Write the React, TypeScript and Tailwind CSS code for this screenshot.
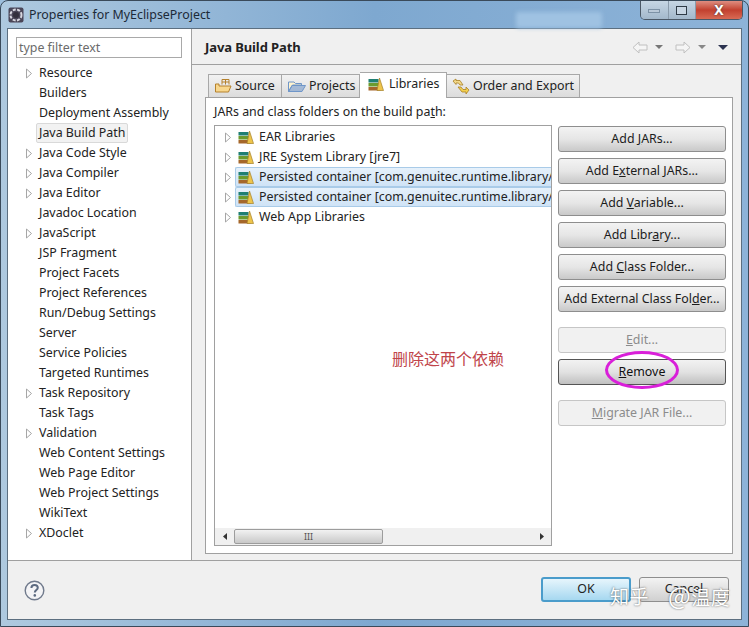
const treeItems = [
  { label: 'Resource', arrow: true },
  { label: 'Builders' },
  { label: 'Deployment Assembly' },
  { label: 'Java Build Path', selected: true },
  { label: 'Java Code Style', arrow: true },
  { label: 'Java Compiler', arrow: true },
  { label: 'Java Editor', arrow: true },
  { label: 'Javadoc Location' },
  { label: 'JavaScript', arrow: true },
  { label: 'JSP Fragment' },
  { label: 'Project Facets' },
  { label: 'Project References' },
  { label: 'Run/Debug Settings' },
  { label: 'Server' },
  { label: 'Service Policies' },
  { label: 'Targeted Runtimes' },
  { label: 'Task Repository', arrow: true },
  { label: 'Task Tags' },
  { label: 'Validation', arrow: true },
  { label: 'Web Content Settings' },
  { label: 'Web Page Editor' },
  { label: 'Web Project Settings' },
  { label: 'WikiText' },
  { label: 'XDoclet', arrow: true },
]

const libraries = [
  { id: 'ear', label: 'EAR Libraries' },
  { id: 'jre', label: 'JRE System Library [jre7]' },
  { id: 'p1', label: 'Persisted container [com.genuitec.runtime.library/com.genuitec.runtime.libraries.javaee]', selected: true },
  { id: 'p2', label: 'Persisted container [com.genuitec.runtime.library/com.genuitec.runtime.libraries.web]', selected: true },
  { id: 'web', label: 'Web App Libraries' },
]

const Arrow = () => (
  <svg width="8" height="11" viewBox="0 0 8 11" className="shrink-0">
    <path d="M1.5 1 L6.5 5.5 L1.5 10 Z" fill="#fff" stroke="#a6a6a6" />
  </svg>
)

const LibIcon = () => (
  <svg width="16" height="14" viewBox="0 0 16 14" className="shrink-0">
    <rect x="0.5" y="2" width="10" height="3.5" fill="#1f7f73" />
    <rect x="0.5" y="6" width="11" height="3.5" fill="#6b9b2e" />
    <rect x="0.5" y="10" width="12" height="3.5" fill="#a5672a" />
    <path d="M11.5 1 L15.5 13.5 L9 13.5 Z" fill="#eec44a" stroke="#a5812a" strokeWidth="0.7" />
  </svg>
)

const FolderIcon = ({ tint }: { tint: string }) => (
  <svg width="20" height="16" viewBox="0 0 20 16" className="shrink-0">
    <path d="M1.5 13.5 V4 H7 L8.5 5.5 H14.5 V7 H5.5 L1.5 13.5 Z" fill="#fff3cf" stroke={tint} />
    <path d="M1.5 13.5 L5 7.5 H18.5 L15 13.5 Z" fill={tint} fillOpacity="0.55" stroke={tint} />
  </svg>
)

const SourceIcon = () => (
  <svg width="20" height="16" viewBox="0 0 20 16" className="shrink-0">
    <path d="M1.5 14 V6 H5 V8 H17 L14.5 14 Z" fill="#f8d78d" stroke="#b5812c" />
    <path d="M8 6.5 V1.5 H15 V6.5 M8 4 H15 M11.5 1.5 V6.5" fill="none" stroke="#b5812c" />
  </svg>
)

const OrderIcon = () => (
  <svg width="20" height="17" viewBox="0 0 20 17" className="shrink-0">
    <path d="M2 3 L5 1 V2.5 H9 L12 7 H9 L7.5 5 H5 V6.5 Z" fill="#f3d98a" stroke="#a98024" strokeWidth="0.8" />
    <path d="M18 12 L15 16 V14 H11 L7 9 H10 L12 11.5 H15 V9 Z" fill="#f3d04f" stroke="#a98024" strokeWidth="0.8" />
  </svg>
)

const Btn = ({ children, disabled, dark }: { children: React.ReactNode; disabled?: boolean; dark?: boolean }) => (
  <div
    className={
      disabled
        ? 'h-[26px] w-[168px] shrink-0 flex items-center justify-center rounded-[3px] border border-[#c6c6c6] bg-[#f1f1f1] text-[#8c8c8c]'
        : dark
          ? 'h-[26px] w-[168px] shrink-0 flex items-center justify-center rounded-[3px] border border-[#555] bg-gradient-to-b from-[#f2f2f2] via-[#e2e2e2] to-[#c0c0c0] text-[#111]'
          : 'h-[26px] w-[168px] shrink-0 flex items-center justify-center rounded-[3px] border border-[#8e8e8e] bg-gradient-to-b from-[#f3f3f3] via-[#e6e6e6] to-[#c9c9c9] text-[#1c1c1c]'
    }
  >
    <span className="whitespace-nowrap">{children}</span>
  </div>
)

const App = () => {
  return (
    <div className="relative h-[627px] w-[749px] overflow-hidden bg-[#9dbfdd] text-[12.4px] leading-[20px] text-[#222] font-['Noto_Sans','Open_Sans',sans-serif]">
      {/* window frame */}
      <div className="flex h-[627px] w-[749px] flex-col rounded-t-[8px] border border-[#3a4a5a] bg-gradient-to-r from-[#aec9df] via-[#7ea8d0] to-[#8db3d8] px-[6px] pb-[6px]">
        {/* title bar */}
        <div className="flex h-[27px] shrink-0 items-start justify-between">
          <div className="flex items-center gap-[5px] pl-[1px] pt-[4px]">
            <svg width="16" height="16" viewBox="0 0 16 16">
              <rect x="0.5" y="0.5" width="15" height="15" rx="2" fill="#4a4658" />
              <circle cx="8" cy="8" r="5.5" fill="none" stroke="#d8d8e0" strokeWidth="2" strokeDasharray="3 1.4" />
              <circle cx="8" cy="8" r="3" fill="#33303d" />
            </svg>
            <span className="text-[#1c2a38]">Properties for MyEclipseProject</span>
          </div>
          {/* blurred window behind the title bar */}
          <div className="ml-auto mr-[38px] mt-[11px] h-[16px] w-[86px] rounded-[2px] bg-[#9fc2e2] blur-[2px]" />
          {/* window buttons */}
          <div className="mr-[-1px] flex h-[19px] w-[103px] overflow-hidden rounded-b-[5px] border border-t-0 border-[#4b5866]">
            <div className="flex flex-1 items-center justify-center border-r border-[#8a9bab] bg-gradient-to-b from-[#c6d6e4] to-[#a3b8cb]">
              <div className="mt-[2px] h-[4px] w-[12px] border border-[#7d92a6] bg-[#bac9d8]" />
            </div>
            <div className="flex flex-1 items-center justify-center border-r border-[#8a9bab] bg-gradient-to-b from-[#c6d6e4] to-[#a3b8cb]">
              <div className="h-[9px] w-[11px] border border-[#2f3b47] bg-[#c8d6e3]" />
            </div>
            <div className="flex w-[46px] items-center justify-center bg-gradient-to-b from-[#de8d80] via-[#c2402f] to-[#d96a54] text-[14px] font-bold text-white [text-shadow:0_0_2px_#333]">X</div>
          </div>
        </div>

        {/* dialog body */}
        <div className="flex min-h-0 flex-1 flex-col border border-[#5c6f80] bg-[#f0f0f0]">
          <div className="flex min-h-0 flex-1 border-b border-[#a0a0a0]">
            {/* left tree */}
            <div className="flex w-[184px] shrink-0 flex-col border-r border-[#a0a0a0] bg-white pl-[8px]">
              <div className="mt-[8px] flex h-[21px] w-[166px] shrink-0 items-center border border-[#a9a9a9] px-[2px] text-[#6b6b6b]">type filter text</div>
              <div className="mt-[5px] flex flex-col">
                {treeItems.map((it) => (
                  <div key={it.label} className="flex h-[20px] items-center">
                    <div className="flex w-[23px] shrink-0 justify-center pl-[3px]">{it.arrow && <Arrow />}</div>
                    <span className={it.selected ? 'ml-[-3px] rounded-[2px] border border-[#d9d9d9] bg-[#f2f2f2] px-[2px] leading-[18px]' : ''}>
                      {it.label}
                    </span>
                  </div>
                ))}
              </div>
            </div>

            {/* right side */}
            <div className="flex min-w-0 flex-1 flex-col">
              <div className="flex h-[36px] shrink-0 items-center justify-between border-b border-[#a0a0a0] pl-[13px] pr-[13px] pt-[1px]">
                <span className="text-[13px] font-bold text-[#222] tracking-[-0.1px]">Java Build Path</span>
                <div className="flex items-center gap-[5px]">
                  <svg width="16" height="13" viewBox="0 0 16 13"><path d="M1 6.5 L7 1 V4 H15 V9 H7 V12 Z" fill="#f5f5f5" stroke="#c0c0c0" /></svg>
                  <svg width="8" height="4" viewBox="0 0 8 4" className="ml-[2px]"><path d="M0 0 H8 L4 4 Z" fill="#777" /></svg>
                  <svg width="16" height="13" viewBox="0 0 16 13" className="ml-[7px]"><path d="M15 6.5 L9 1 V4 H1 V9 H9 V12 Z" fill="#f5f5f5" stroke="#c0c0c0" /></svg>
                  <svg width="8" height="4" viewBox="0 0 8 4" className="ml-[2px]"><path d="M0 0 H8 L4 4 Z" fill="#888" /></svg>
                  <svg width="10" height="5" viewBox="0 0 10 5" className="ml-[7px]"><path d="M0 0 H10 L5 5 Z" fill="#2c3350" /></svg>
                </div>
              </div>

              {/* tabs */}
              <div className="flex flex-1 flex-col pl-[13px] pr-[8px] pt-[7px] pb-[6px]">
                <div className="relative z-10 flex h-[25px] shrink-0 items-end pl-[3px] whitespace-nowrap">
                  <div className="flex h-[23px] w-[74px] items-center gap-[1px] border border-b-0 border-[#a8a8a8] bg-gradient-to-b from-[#f2f2f2] to-[#dcdcdc] pl-[5px]">
                    <SourceIcon /><span>Source</span>
                  </div>
                  <div className="flex h-[23px] w-[78px] items-center gap-[2px] border border-b-0 border-l-0 border-[#a8a8a8] bg-gradient-to-b from-[#f2f2f2] to-[#dcdcdc] pl-[5px]">
                    <FolderIcon tint="#6f96c9" /><span>Projects</span>
                  </div>
                  <div className="mb-[-1px] flex h-[26px] w-[87px] items-center gap-[5px] border border-b-0 border-l-0 border-[#a8a8a8] bg-white pb-[3px] pl-[8px]">
                    <LibIcon /><span>Libraries</span>
                  </div>
                  <div className="flex h-[23px] w-[133px] items-center gap-[2px] border border-b-0 border-l-0 border-[#a8a8a8] bg-gradient-to-b from-[#f2f2f2] to-[#dcdcdc] pl-[4px]">
                    <OrderIcon /><span>Order and Export</span>
                  </div>
                </div>
                <div className="flex min-h-0 flex-1 flex-col border border-[#a0a0a0] bg-white pl-[8px] pr-[7px] pt-[4px] pb-[7px]">
                  <div className="h-[20px] shrink-0">JARs and class folders on the build pa<span className="underline">t</span>h:</div>
                  <div className="mt-[3px] flex min-h-0 flex-1 gap-[6px]">
                    {/* library list */}
                    <div className="flex w-[338px] shrink-0 flex-col overflow-hidden border border-[#a0a0a0]">
                      <div className="flex min-h-0 flex-1 flex-col pt-[1px]">
                        {libraries.map((lib) => (
                          <div key={lib.id} className="flex h-[20px] items-center">
                            <div className="flex w-[20px] shrink-0 justify-center pl-[5px]"><Arrow /></div>
                            <div className={lib.selected ? 'flex h-[20px] min-w-0 flex-1 items-center gap-[5px] overflow-hidden whitespace-nowrap rounded-l-[2px] border border-r-0 border-[#a9cbe8] bg-gradient-to-b from-[#e6f1fb] to-[#cfe3f6] pl-[2px]' : 'flex min-w-0 flex-1 items-center gap-[5px] whitespace-nowrap pl-[3px]'}>
                              <LibIcon /><span>{lib.label}</span>
                            </div>
                          </div>
                        ))}
                      </div>
                      {/* horizontal scrollbar */}
                      <div className="flex h-[17px] shrink-0 items-center bg-[#f0f0f0]">
                        <div className="flex w-[19px] justify-center"><svg width="4" height="7" viewBox="0 0 4 7"><path d="M4 0 V7 L0 3.5 Z" fill="#333" /></svg></div>
                        <div className="flex h-[15px] w-[149px] items-center justify-center rounded-[2px] border border-[#9c9c9c] bg-gradient-to-b from-[#f2f2f2] to-[#c9c9c9] text-[9px] leading-none text-[#555]">III</div>
                        <div className="ml-auto flex w-[18px] justify-center"><svg width="4" height="7" viewBox="0 0 4 7"><path d="M0 0 V7 L4 3.5 Z" fill="#333" /></svg></div>
                      </div>
                    </div>
                    {/* side buttons */}
                    <div className="flex flex-col gap-[6px] pt-[1px]">
                      <Btn>Add <span className="underline">J</span>ARs...</Btn>
                      <Btn>Add E<span className="underline">x</span>ternal JARs...</Btn>
                      <Btn>Add <span className="underline">V</span>ariable...</Btn>
                      <Btn>Add Libr<span className="underline">a</span>ry...</Btn>
                      <Btn>Add <span className="underline">C</span>lass Folder...</Btn>
                      <Btn>Add External Class Fol<span className="underline">d</span>er...</Btn>
                      <div className="mt-[9px]"><Btn disabled><span className="underline">E</span>dit...</Btn></div>
                      <Btn dark><span className="underline">R</span>emove</Btn>
                      <div className="mt-[9px]"><Btn disabled><span className="underline">M</span>igrate JAR File...</Btn></div>
                    </div>
                  </div>
                </div>
              </div>
            </div>
          </div>

          {/* bottom bar */}
          <div className="flex h-[58px] shrink-0 items-center justify-between pl-[16px] pr-[12px]">
            <svg width="21" height="21" viewBox="0 0 21 21">
              <circle cx="10.5" cy="10.5" r="9.3" fill="#f4f4f6" stroke="#707a8c" strokeWidth="1.4" />
              <path d="M7.4 8 C7.4 5.9 9 5 10.6 5 C12.4 5 13.8 6.1 13.8 7.8 C13.8 10 10.8 10.2 10.8 12.6" fill="none" stroke="#5c6a80" strokeWidth="2" />
              <circle cx="10.8" cy="15.4" r="1.3" fill="#5c6a80" />
            </svg>
            <div className="flex gap-[8px] pb-[2px]">
              <div className="flex h-[25px] w-[90px] items-center justify-center rounded-[3px] border-2 border-[#4a9ccb] bg-gradient-to-b from-[#e6f5fc] to-[#a6d8f0] text-[#222]">OK</div>
              <div className="flex h-[25px] w-[90px] items-center justify-center rounded-[3px] border border-[#8e8e8e] bg-gradient-to-b from-[#f3f3f3] to-[#d0d0d0] text-[#222]">Cancel</div>
            </div>
          </div>
        </div>
      </div>

      {/* annotations on top of the screenshot */}
      <div className="absolute left-[392px] top-[348px] text-[16px] leading-[20px] text-[#c0444a] font-['Noto_Sans_CJK_SC',sans-serif]">删除这两个依赖</div>
      <div className="absolute left-[605px] top-[351px] h-[38px] w-[74px] rounded-[50%] border-[3px] border-[#d91fd9]" />
      <div className="absolute left-[610px] top-[581px] flex items-center gap-[19px] text-[19px] leading-[28px] tracking-[0.5px] text-white font-['Noto_Sans_CJK_SC',sans-serif] [text-shadow:0_0_2px_rgba(60,60,60,0.9)]">
        <span>知乎</span>
        <span><span className="text-[24px]">@</span>温度</span>
      </div>
    </div>
  )
}

export default App
